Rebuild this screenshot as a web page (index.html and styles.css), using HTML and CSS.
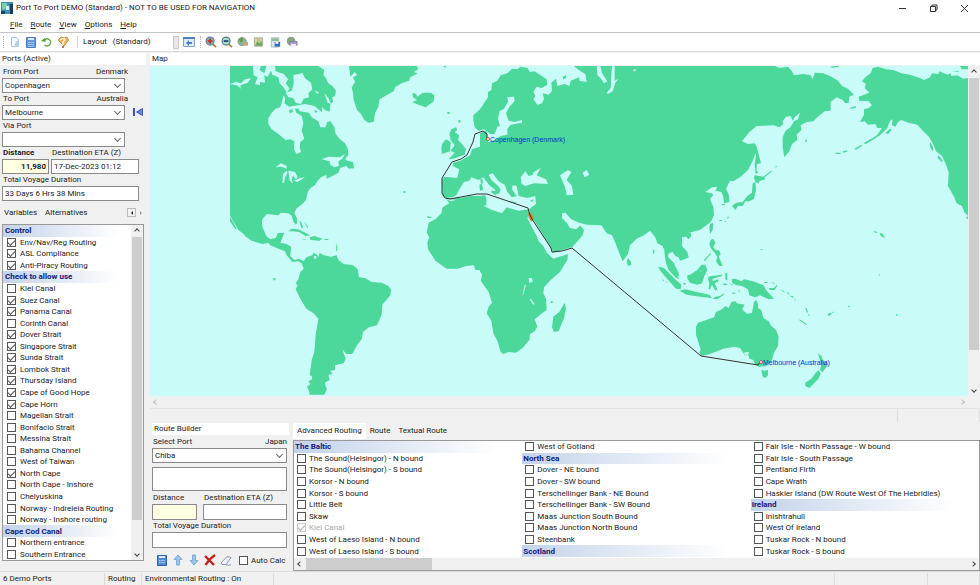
FILE: index.html
```html
<!DOCTYPE html>
<html lang="en">
<head>
    <meta charset="UTF-8">
    <meta name="viewport" content="width=device-width, initial-scale=1.0">
    <title>Port To Port DEMO (Standard)</title>
    <link rel="stylesheet" href="styles.css">
</head>
<body>

<!-- Title bar -->
<header class="titlebar">
    <svg class="app-icon" width="12" height="12" viewBox="0 0 12 12"><path fill="#3f8fb0" d="M0 0h12v12H0z"/><path fill="#7fd0a0" d="M1 1h5v4L3 8 1 7z"/><path fill="#d8eef4" d="M5 4h3v4H5z"/><path fill="#17405e" d="M9 2h3v10H9zM0 9h4v3H0z"/></svg>
    <h1>Port To Port DEMO (Standard) - NOT TO BE USED FOR NAVIGATION</h1>
    <div class="window-buttons">
        <button aria-label="Minimize"><svg width="9" height="9" viewBox="0 0 9 9"><path d="M1 4.500h7"/></svg></button>
        <button aria-label="Restore"><svg width="9" height="9" viewBox="0 0 9 9"><path d="M1.500 2.500h5v5h-5zM3 2.500v-1.500h5v5H6.500"/></svg></button>
        <button aria-label="Close"><svg width="9" height="9" viewBox="0 0 9 9"><path d="M1 1l7 7M8 1L1 8"/></svg></button>
    </div>
</header>

<nav class="menu">
    <a href="#"><u>F</u>ile</a>
    <a href="#"><u>R</u>oute</a>
    <a href="#"><u>V</u>iew</a>
    <a href="#"><u>O</u>ptions</a>
    <a href="#"><u>H</u>elp</a>
</nav>

<div class="toolbar">
    <span class="grip"></span>
    <button aria-label="New"><svg width="12" height="12" viewBox="0 0 12 12"><path fill="#f4f9ff" stroke="#a9bfdd" d="M2.500 1.500h5l2 2v7h-7z"/><path fill="#b7cdea" d="M7 5h3v6H5z"/></svg></button>
    <button aria-label="Calculate"><svg width="12" height="12" viewBox="0 0 12 12"><path fill="#5f97d8" stroke="#4a7cbc" d="M1.500 1.500h9v10h-9z"/><path fill="#d9ecff" d="M3 2h6v2H3z"/><path stroke="#b9d6f5" d="M3 6.500h6M3 8.500h6M3 10.500h6" stroke-dasharray="1.500 .7"/></svg></button>
    <button aria-label="Refresh"><svg width="12" height="12" viewBox="0 0 12 12"><path fill="none" stroke="#6aae52" stroke-width="1.500" d="M3 4.500A3.600 3.600 0 1 1 3.500 9"/><path fill="#4da02f" d="M0 5l4.500 1L4 1.800z"/></svg></button>
    <button aria-label="Help"><svg width="12" height="12" viewBox="0 0 12 12"><path fill="#e9b45b" stroke="#cf924a" d="M1 4l3-3 3 1 3-1 1.500 3L7 10 5 8z"/><path fill="none" stroke="#fff" stroke-width="1.300" d="M4 4c0-2 4-2 4 0L6 6v3"/><circle cx="6" cy="11" r="1" fill="#8d4c38"/></svg></button>
    <span class="split"></span>
    <span class="layout-name">Layout&nbsp;&nbsp; (Standard)</span>
    <button class="layout-drop" aria-label="Choose layout"></button>
    <button aria-label="Save layout"><svg width="12" height="12" viewBox="0 0 12 12"><path fill="#dcecfb" stroke="#7fa4d0" d="M.5 1.500h11v9H.5z"/><path fill="#4c80c0" d="M0 1h12v2H0zM3 7l3-3v2h3v2H6v2z"/></svg></button>
    <span class="grip grip-map"></span>
    <button aria-label="Zoom in"><svg width="12" height="12" viewBox="0 0 13 12"><path stroke="#b8862f" stroke-width="2" d="M8 8l4 3.500"/><circle cx="5.500" cy="5" r="4.300" fill="#7fb0a8" stroke="#6a7e96" stroke-width="1.300"/><path stroke="#d02b2b" stroke-width="2" d="M3 5h5M5.500 2.500v5"/></svg></button>
    <button aria-label="Zoom out"><svg width="12" height="12" viewBox="0 0 13 12"><path stroke="#b8862f" stroke-width="2" d="M8 8l4 3.500"/><circle cx="5.500" cy="5" r="4.300" fill="#a9dcc8" stroke="#5a7a90" stroke-width="1.300"/><path stroke="#284a78" stroke-width="2" d="M3 5h5"/></svg></button>
    <button aria-label="Pan map"><svg width="12" height="12" viewBox="0 0 13 12"><circle cx="5.500" cy="5.500" r="4.500" fill="#86b9a0" stroke="#7c9f88"/><path fill="#6c9a3e" d="M2 3l4-2 1 3-3 3z"/><path fill="#b8a88a" d="M6 6h6v4H6z"/></svg></button>
    <button aria-label="Map picture"><svg width="12" height="12" viewBox="0 0 13 12"><path fill="#c6d3b4" stroke="#a4ae98" d="M1.500 1.500h9v9h-9z"/><path fill="#6fa45c" d="M2 10l3-5 2 3 2-4 1 6z"/><circle cx="6" cy="4" r="1.500" fill="#d8b25c"/></svg></button>
    <button class="spaced" aria-label="Save map"><svg width="12" height="12" viewBox="0 0 13 12"><path fill="#dde8f2" stroke="#a4b6c8" d="M1.500 1.500h8v10h-8z"/><path fill="#8fbb98" d="M2 2h7v3H2z"/><path fill="#2f6cc0" d="M5 6h6v5H5z"/><path fill="#fff" d="M6 6h3v2H6z"/></svg></button>
    <button aria-label="Print map"><svg width="12" height="12" viewBox="0 0 13 12"><circle cx="5.500" cy="5" r="4.200" fill="#84a878" stroke="#869a88"/><path fill="#a494c4" stroke="#8a7cae" d="M4 5.500h8v4H4z"/><path fill="#ece8f6" d="M5 8h6v3H5z"/></svg></button>
</div>

<div class="workspace">

    <!-- Ports panel -->
    <aside class="sidebar">
        <h2 class="pane-title">Ports (Active)</h2>
        <div class="ports">
            <div class="field narrow">
                <div class="caption"><label for="fromPort">From Port</label><span>Denmark</span></div>
                <span class="drop"><select id="fromPort"><option>Copenhagen</option></select></span>
            </div>
            <div class="with-button">
                <div class="field narrow">
                    <div class="caption"><label for="toPort">To Port</label><span>Australia</span></div>
                    <span class="drop"><select id="toPort"><option>Melbourne</option></select></span>
                </div>
                <button class="swap" aria-label="First port"><svg width="11" height="10" viewBox="0 0 11 10"><path fill="#3c55b8" d="M0 1h2v8H0z"/><path fill="#6f86d6" stroke="#3c55b8" d="M9.500 1.500v7L3.500 5z"/></svg></button>
            </div>
            <div class="field narrow">
                <div class="caption"><label for="viaPort">Via Port</label></div>
                <span class="drop"><select id="viaPort"><option></option></select></span>
            </div>
            <div class="pair">
                <div class="field distance">
                    <div class="caption strong"><label for="distance">Distance</label></div>
                    <input type="text" id="distance" class="number" value="11,980">
                </div>
                <div class="field">
                    <div class="caption"><label for="eta">Destination ETA (Z)</label></div>
                    <input type="text" id="eta" value="17-Dec-2023 01:12">
                </div>
            </div>
            <div class="field">
                <div class="caption"><label for="duration">Total Voyage Duration</label></div>
                <input type="text" id="duration" value="33 Days 6 Hrs 38 Mins">
            </div>
        </div>
        <div class="side-tabs">
            <button>Variables</button>
            <button>Alternatives</button>
            <button class="tab-prev" aria-label="Previous tab"></button>
            <button class="tab-next" aria-label="Next tab"></button>
        </div>
        <div class="listbox">
            <div class="checks" id="variables"></div>
            <div class="vscroll"><i class="up"></i><div class="thumb"></div><i class="down"></i></div>
        </div>
    </aside>

    <main class="content">
        <h2 class="pane-title">Map</h2>
        <div class="map-row">
            <svg class="map" viewBox="150 66 818 330" preserveAspectRatio="xMidYMid slice" role="img" aria-label="World map with route">
                <rect x="0" y="0" width="1400" height="700" fill="#c9fbf9"/>
                <!-- North America, Greenland, Iceland -->
                <g transform="translate(225 60) scale(.33333)">
                    <path class="land" d="M15 18H280L298 30 295 45 303 55 310 70 322 78 333 92 330 108 322 112 324 125 316 132 314 155 300 150 290 140 292 160 310 172 320 190 328 200 332 222 345 238 360 250 368 265 370 284 360 298 368 302 384 306 387 325 372 326 364 318 345 324 340 338 322 348 305 356 304 345 290 350 278 362 270 375 256 385 248 396 243 420 232 432 215 445 208 458 217 478 215 492 207 488 200 468 190 460 168 458 160 466 125 462 112 478 108 500 110 525H60L40 510 22 480 15 465z"/>
                    <path class="water" d="M130 175L140 158 152 146 166 142 176 106 181 115 178 130 192 140 218 136 240 132 268 138 290 155 316 166 316 184 306 186 302 202 286 202 280 184 260 172 252 158 226 154 214 158 230 168 235 190 230 212 238 236 226 246 224 262 228 276 214 282 207 268 208 244 196 238 182 240 160 222 140 208 130 192zM205 45L222 42 232 38 240 55 258 68 262 88 250 100 252 112 236 116 228 132 212 128 205 114 190 112 182 98 200 92 206 72zM84 18H108L104 30 118 40 124 18H150L152 34 176 42 190 58 182 70 194 86 186 98 174 80 164 70 160 52 142 44 138 32 128 50 118 46 120 68 106 66 104 76 90 72 98 52 86 46zM15 72L32 66 48 70 60 58 78 55 68 68 46 76 48 86 36 76zM268 92l14 4-4 6zM298 100l12 14 8 18-10-4zM290 298l20-8 34 2 16-10-8 14-12 8 2 14-14 4-12-8-2-10zM152 322l16-12 18 8-2 8-14-6zM172 368l2-26 10-10 4 6-8 14-2 16zM190 332l20 4 8 16-6 6-8-12-4 14 4 10-10-8zM206 362l12 4 22-14-14 2z"/>
                    <path class="land" d="M210 145l12 2 2 10-10 2zM192 150l10-2 2 8-10 4zM268 150l10 4-6 6z"/>
                    <path class="land" d="M372 18H575L580 28 566 36 578 40 556 52 552 62 530 70 510 82 506 94 484 106 464 118 460 140 450 160 446 186 430 188 418 180 408 162 396 150 386 120 384 98 380 82 390 66 384 52 396 46 390 36 376 50zM562 98L574 102 576 110 594 98 618 98 628 106 626 124 602 142 574 132 562 126 576 120 564 112zM655 18h8l-2 5zM668 156h6v5h-6zM534 394h8v4h-8zM606 468l12 4-6 3z"/>
                    <path class="land" d="M15 470l20 36-4 2-16-26zM222 482l6 4 6 14-5 2zM236 482l14 20-3 2z"/>
                </g>
                <!-- South America -->
                <g transform="translate(225 220) scale(.33333)">
                    <path class="land" d="M35-10H110L112 20 124 48 136 58 152 54 158 40 178 38 166 68 184 72 198 80 196 108 208 120 222 116 236 124 244 112 262 106 266 98 276 104 280 112 284 98 296 106 318 110 335 106 340 120 356 132 384 136 398 148 402 172 420 174 440 186 470 188 490 198 498 208 496 226 484 240 472 254 470 284 456 316 432 322 414 336 410 358 396 376 382 402 364 402 352 388 362 416 356 430 330 436 330 450 316 452 322 462 310 464 314 480 300 488 302 500 306 506 298 524H254L252 512 246 500 256 492 250 484 262 478 260 468 254 466 260 420 268 396 272 344 280 296 266 280 244 266 226 236 212 208 218 196 212 190 220 178 226 156 236 146 230 130 218 124 202 126 184 104 180 94 160 86 136 76 130 68 112 72 80 62 60 48 58 30z"/>
                    <path class="land" d="M190 34l10-8 20 2 36 18-14 2-20-12-18-2zM254 52l14-4 24 8-8 6-28-2zM230 58h12v3zM298 57h12v3h-12zM332 66l5 14-1 14-3-2 1-14zM206-2l10 12-4 4zM228 10l5 14-3 2zM145 174h6v7h-6zM15-2l20 28-5-2-15-20z"/>
                    <path class="water" d="M266 108h8v8h-6z"/>
                </g>
                <!-- Europe and Asia -->
                <g transform="translate(420 60) scale(.33333)">
                    <path class="land" d="M160 180L160 166 180 148 204 112 204 96 214 90 216 70 232 62 242 46 262 40 276 26 292 28 302 20 322 24 330 36 344 34 380 58 382 74 366 84 350 80 340 96 346 108 340 118 352 134 366 130 372 116 368 100 386 104 396 92 394 68 408 56 412 78 434 72 448 78 452 62 478 52 478 62 500 66 496 42 476 30 462 18H1065L1078 24 1104 20 1116 34 1122 46 1150 42 1172 46 1178 58 1184 38 1210 40 1234 50 1254 62 1266 78 1284 86 1302 104 1288 110 1286 128 1276 130 1268 120 1250 112 1232 126 1232 152 1214 154 1196 168 1180 184 1160 186 1142 196 1144 210 1130 224 1132 240 1116 252 1108 274 1093 292 1088 262 1088 232 1096 214 1112 200 1122 184 1134 178 1140 158 1124 172 1118 182 1112 168 1098 170 1088 184 1090 192 1078 202 1062 196 1010 198 988 216 966 244 984 252 1004 250 1006 282 998 302 984 330 962 350 940 364 930 362 918 386 926 402 928 426 912 430 910 410 904 396 886 392 892 380 876 382 856 396 874 400 880 404 870 418 880 440 882 466 872 486 840 510 806 518 812 526 792 532 786 530 786 558 802 576 806 592 794 598 780 602 776 592 766 588 758 576 746 580 742 596 752 614 768 638 778 658 766 652 746 630 738 610 734 582 728 558 712 550 706 532 690 512 674 524 650 536 630 556 624 582 608 604 598 580 586 548 576 526 560 520 544 496 500 494 470 486 456 496 436 500 440 482 456 486 466 480 480 496 492 510 488 526 458 560 396 580 388 556 356 506 334 470 328 450 300 430 220 440 110 420 85 416 68 408 66 360 72 350 112 354 118 328 98 318 100 308 122 302 150 286 156 268 180 260 180 220 198 212 192 208 176 212 164 202z"/>
                    <path class="water" d="M262 112L282 110 284 124 268 140 258 160 266 182 284 186 306 180 306 188 272 194 262 206 262 224 242 228 224 240 204 246 200 212 210 222 224 222 232 200 240 198 234 176 238 154 252 146 264 126z"/>
                    <path class="water" d="M305 372L302 352 316 334 326 348 340 344 338 338 362 324 350 346 378 358 384 372 342 370 316 378zM420 346L444 330 454 336 440 360 456 378 460 404 440 406 434 378zM488 338L500 330 508 344 494 352zM78 414L98 412 110 404 118 388 132 366 148 362 154 352 176 360 190 352 208 376 224 388 232 402 238 400 242 388 232 376 214 360 206 344 218 340 236 364 254 374 262 396 276 412 290 408 276 388 278 376 290 378 296 408 322 414 346 408 348 432 328 447 300 448 266 440 250 440 246 456 220 448 200 436 188 408 150 408 120 414zM541 18L546 40 562 64 552 70 546 60 532 44 530 18zM576 18h8l0 44 12-6-10 12-8 26-14 8-4-4 12-14 2-38zM426 460l10-2 18 20 22 10 6 8-14 12-18-4-10-16-14-14zM328 458l60 98 14 22-10-2-24-46z"/>
                    <path class="land" d="M181 358l6-2 2 14-6 2zM178 374l8-2 3 18-9 2zM214 392l20 2-6 12-14-8zM270 424l18 2v3l-18-2zM330 422l12-4-6 8zM94 208L108 202 112 210 104 216 118 226 114 240 128 254 138 268 134 284 100 296 86 298 104 278 92 272 104 256 92 240 88 222zM66 252L78 238 92 246 90 274 66 282 64 266zM82 157h6v4h-6zM115 180h6v8h-5zM186 240l12-4 4 8-12 4zM70 18h8l-2 5zM428 50l10-4 0 8-8 4z"/>
                    <!-- Sakhalin, Kurils, Japan -->
                    <path class="land" d="M1004 250l6 10 10 38 3 12-12 2-2 18 6 8-8 4-3-30 4-26-8-20zM1004 346l12 2 16 2 4 8-16 4-4 8-10-4-4-12zM998 370l8-4 2 24-6 26-14 8-12 0-8 14-14 0-8 12-10-12 12-10 20-2 14-18 14-10zM1030 350l24-18 3 1-22 18zM1062 322l8-4 1 3zM906 432h8v4h-8zM922 470l6 1-6 6zM914 484l5-1-3 4zM1155 240l4-2 2 8-4 1zM1288 144l20-6-2 6-12 2zM1230 20l26-4 1 4-20 3zM868 498l10-6 0 18-8 12z"/>
                    <path class="water" d="M638 30l10-3-3 8zM728 566l4-1 2 12-4 1z"/>
                </g>
                <!-- Alaska and the west coast -->
                <g transform="translate(600 60) scale(.33333)">
                    <path class="land" d="M1105 54L1090 56 1072 46 1054 48 1052 40 1042 44 1018 34 1014 42 996 40 990 52 972 60 960 54 930 44 904 40 880 30 858 28 834 20 818 24 812 40 796 52 786 64 798 72 794 84 808 98 776 110 778 122 806 124 816 136 806 144 792 148 792 164 780 186 794 184 804 194 826 192 832 204 846 204 832 224 818 234 790 250 798 252 840 226 862 204 870 182 878 178 876 196 886 200 894 186 904 180 926 188 952 194 972 216 988 232 1002 258 1008 274 1026 288 1040 318 1046 338 1044 378 1062 410 1070 430 1086 438 1094 458 1105 468zM1080 18h25v10h-20zM1056 34h20v3zM856 220l14-14 5 2-10 14zM990 246l8 12 2 16-7-6-4-14zM1016 286l12 16-4 4-12-14zM764 266l20-12 2 3-18 12zM706 278l16 0 0 4-14 0zM728 274l14-3 0 4-14 3zM1098 472l7-4v12zM822 514l10 2-1 2-10-1zM838 518l8 2 8 12-8-4z"/>
                </g>
                <!-- Africa -->
                <g transform="translate(410 190) scale(.33333)">
                    <path class="land" d="M108 26L122 34 146 28 190 20 226 16 230 34 222 48 246 60 276 70 290 52 326 62 356 58 358 74 352 84 362 104 380 138 386 154 400 168 410 188 430 206 474 192 472 210 462 226 450 246 420 272 402 292 400 310 408 326 410 360 396 370 374 388 382 410 374 424 360 432 358 450 338 474 318 488 296 486 280 492 272 486 262 452 250 430 244 392 230 370 236 350 246 338 236 306 212 272 216 254 208 240 196 240 192 226 168 228 144 236 110 236 76 212 66 196 54 178 52 156 58 142 50 128 56 98 78 86 94 70 98 52 118 40zM464 338L468 356 462 384 446 424 432 426 426 412 430 380 448 366zM52 80h12v4H52zM422 334h6v5h-6z"/>
                    <path class="water" d="M356 264l10 0 2 12-10 2zM358 326l4 0 12 16-4 2zM344 286l4-2-8 30-3 2z"/>
                    <path class="sand" d="M354 66l10 4 9 17-9 8-8-11z"/>
                </g>
                <!-- South-east Asia, Australia and the Pacific -->
                <g transform="translate(620 220) scale(.33333)">
                    <path class="land" d="M24 114l8 10 2 10-10 4-4-12zM114 140L132 144 150 162 168 180 184 194 182 208 168 206 150 186 134 168 122 154zM178 212L196 208 230 216 268 224 276 234 240 230 200 224zM136 108l8 2 18 20 14 30 2 10-14-8-16-20zM202 166L210 164 232 150 244 134 256 134 262 150 254 166 246 190 232 194 210 188 202 176zM266 170l10-2 30-4 0 4-28 8 0 8 16-6 2 6-12 6 8 18-6 4-10-18-6 14-4 0 2-20-4-8zM316 158l6 2 0 22-6-4zM272 60l8-4 6 12-6 14 8 12-4 4-12-14-4-12zM282 88l16 4 4 12-6 4 8 20 4 10-10 0-10-14 4-12-8-14zM252 120l20-22 2 2-20 24zM334 178L346 176 364 184 372 178 400 184 430 196 440 212 462 236 446 238 420 226 406 232 388 226 384 208 366 198 350 196 338 190zM446 204l16 0 8-8-2-6 4 8-8 12-14 0zM432 186l10 0 0 3-10 0zM450 186l14 4-1 3zM480 208l14 6-2 3zM498 216l10 4-2 4zM508 226l14 4-4 4zM522 234l6 8-4-1zM286 230l14-2 12-8 0 4-20 14-14-2zM310 190l12 2-2 4-10-2zM326 190l12 3-1 3zM336 218h10v3h-10zM354 206l6 8-3 2zM98 92l5-4 0 12-4 2zM270 12l8-4 2 6-6 20-4-8zM198 38l14 0 2 10-8 10-8-8zM298 0h8v3h-8zM556 264l4 1 4 12-3 1zM564 282l5 4-3 2zM538 298l22 14-2 3-20-14zM622 282l10-4 4 4-10 6zM636 278l5-4-1 5zM684 257l8 4-8 0zM776 162l5 3-3 2zM828 282h4v5h-4zM422 87h5v3h-5zM762 33l10 3-2 2zM780 40l14 10 0 4-12-6zM126 178l6 2-2 4zM138 184l4 4-2 2zM188 188l10 2-4 6z"/>
                    <path class="land" d="M228 320L234 308 252 302 282 292 288 276 306 268 316 258 326 264 334 246 348 244 350 250 374 254 366 268 382 282 396 278 402 246 408 240 414 252 414 264 424 270 430 294 446 304 452 316 468 330 476 350 474 378 462 398 456 420 440 438 416 440 404 432 400 420 388 416 384 402 376 408 360 384 344 380 310 386 286 396 262 404 244 408 238 398 242 388 228 344zM424 450L434 452 444 450 444 466 436 474 428 470zM594 400L604 408 610 424 620 428 622 438 608 456 600 450 604 434zM596 450L602 462 594 478 580 492 568 504 556 498 556 488 574 476 586 460z"/>
                    <path class="water" d="M370 398l16-2 0 6-10 4zM240 152l3 0-2 4z"/>
                </g>
                <path class="route" d="M487 138L487 134 483 131 475 134 473 142 467 155 461 159 452 162 442 178 442 193 445 198 450 199 477 194 487 194 528 208 530 215 532 219 551 248 552 252 562 251 572 248 701 356 758 365 760 362"/>
                <circle class="pin" cx="488" cy="139" r="1.500"/>
                <circle class="pin" cx="761" cy="362" r="1.500"/>
                <text class="port-name" x="490" y="142">Copenhagen (Denmark)</text>
                <text class="port-name" x="763" y="365">Melbourne (Australia)</text>
            </svg>
            <div class="vscroll"><i class="up"></i><div class="thumb"></div><i class="down"></i></div>
        </div>
        <div class="hscroll disabled"><i class="left"></i><div class="track"></div><i class="right"></i></div>
        <div class="map-status"><span></span><span></span></div>

        <div class="bottom">
            <!-- Route builder -->
            <section class="builder">
                <h2 class="pane-title">Route Builder</h2>
                <div class="field">
                    <div class="caption"><label for="selectPort">Select Port</label><span>Japan</span></div>
                    <span class="drop"><select id="selectPort"><option>Chiba</option></select></span>
                </div>
                <textarea aria-label="Route ports"></textarea>
                <div class="pair">
                    <div class="field distance">
                        <div class="caption"><label for="legDistance">Distance</label></div>
                        <input type="text" id="legDistance" class="number">
                    </div>
                    <div class="field">
                        <div class="caption"><label for="legEta">Destination ETA (Z)</label></div>
                        <input type="text" id="legEta">
                    </div>
                </div>
                <div class="field">
                    <div class="caption"><label for="legDuration">Total Voyage Duration</label></div>
                    <input type="text" id="legDuration">
                </div>
                <div class="builder-tools">
                    <button aria-label="Calculate route"><svg width="12" height="12" viewBox="0 0 12 12"><path fill="#4f8bd0" stroke="#2f62a8" d="M1.500 1.500h9v10h-9z"/><path fill="#d9ecff" d="M3 2h6v2H3z"/><path stroke="#b9d6f5" d="M3 6.500h6M3 8.500h6" stroke-dasharray="1.500 .7"/></svg></button>
                    <button aria-label="Move up"><svg width="12" height="12" viewBox="0 0 12 12"><path fill="#9cc3ee" stroke="#7fabdc" d="M6 1l4 4.500H7.500V11h-3V5.500H2z"/></svg></button>
                    <button aria-label="Move down"><svg width="12" height="12" viewBox="0 0 12 12"><path fill="#9cc3ee" stroke="#7fabdc" d="M6 11l4-4.500H7.500V1h-3v5.500H2z"/></svg></button>
                    <button aria-label="Delete"><svg width="12" height="12" viewBox="0 0 12 12"><path stroke="#c42218" stroke-width="2.400" d="M1 2l9 9M11 1Q5 5 1.500 11" fill="none"/></svg></button>
                    <button aria-label="Clear"><svg width="12" height="12" viewBox="0 0 12 12"><path fill="#eef0fa" stroke="#8f97bd" d="M1 9l6-6.500 4 1L6 10.500H2z"/><path stroke="#8f97bd" d="M6 11h5"/></svg></button>
                    <label class="check"><input type="checkbox">Auto Calc</label>
                </div>
            </section>

            <!-- Advanced routing -->
            <section class="routing">
                <div class="tabs">
                    <button class="active">Advanced Routing</button>
                    <button>Route</button>
                    <button>Textual Route</button>
                </div>
                <div class="routing-box">
                    <div class="routing-grid" id="routing"></div>
                    <div class="hscroll"><i class="left"></i><div class="track"><div class="thumb"></div></div><i class="right"></i></div>
                </div>
            </section>
        </div>
    </main>
</div>

<footer class="statusbar">
    <span class="ports-count">6 Demo Ports</span>
    <span class="mode">Routing</span>
    <span class="env">Environmental Routing : On</span>
    <span class="rest"></span>
    <span class="cell"></span>
    <span class="cell-last"></span>
</footer>

<script>
    // "#" starts a group heading, "+" is checked, "x" is disabled
    const variables = [
        '#Control', '+Env/Nav/Reg Routing', '+ASL Compliance', '+Anti-Piracy Routing',
        '#Check to allow use', '-Kiel Canal', '+Suez Canal', '+Panama Canal', '-Corinth Canal',
        '+Dover Strait', '+Singapore Strait', '+Sunda Strait', '+Lombok Strait', '+Thursday Island',
        '+Cape of Good Hope', '+Cape Horn', '-Magellan Strait', '-Bonifacio Strait', '-Messina Strait',
        '-Bahama Channel', '-West of Taiwan', '+North Cape', '-North Cape - Inshore', '-Chelyuskina',
        '-Norway - Indreleia Routing', '-Norway - Inshore routing',
        '#Cape Cod Canal', '-Northern entrance', '-Southern Entrance'
    ];

    const routing = [
        '#The Baltic', '-The Sound(Helsingor) - N bound', '-The Sound(Helsingor) - S bound',
        '-Korsor - N bound', '-Korsor - S bound', '-Little Belt', '-Skaw', 'xKiel Canal',
        '-West of Laeso Island - N bound', '-West of Laeso Island - S bound',
        '-West of Gotland', '#North Sea', '-Dover - NE bound', '-Dover - SW bound',
        '-Terschellinger Bank - NE Bound', '-Terschellinger Bank - SW Bound',
        '-Maas Junction South Bound', '-Maas Junction North Bound', '-Steenbank', '#Scotland',
        '-Fair Isle - North Passage - W bound', '-Fair Isle - South Passage', '-Pentland Firth',
        '-Cape Wrath', '-Haskier Island (DW Route West Of The Hebridies)', '#Ireland',
        '-Inishtrahull', '-West Of Ireland', '-Tuskar Rock - N bound', '-Tuskar Rock - S bound'
    ];

    // Fill a list with headings and tick boxes
    function fillList(id, items) {
        document.getElementById(id).innerHTML = items.map(item => {
            const mark = item[0];
            const name = item.slice(1);
            if (mark === '#') return `<h3>${name}</h3>`;
            const state = mark === '+' ? 'checked' : mark === 'x' ? 'checked disabled' : '';
            return `<label class="check"><input type="checkbox" ${state}>${name}</label>`;
        }).join('');
    }

    fillList('variables', variables);
    fillList('routing', routing);
</script>

</body>
</html>
```
FILE: styles.css
```css
* {
    box-sizing: border-box;
}

body {
    margin: 0;
    height: 100vh;
    display: flex;
    flex-direction: column;
    overflow: hidden;
    background: #f0f0f0;
    color: #222;
    font: 8px/12px Roboto, "Open Sans", sans-serif;
}

button, input, select, textarea {
    margin: 0;
    padding: 0;
    border: 0;
    background: none;
    color: inherit;
    font: inherit;
}

button {
    display: inline-flex;
    align-items: center;
    justify-content: center;
}

h1, h2, h3 {
    margin: 0;
    font-size: inherit;
    font-weight: normal;
}

/* Title, menu and toolbar */
.titlebar {
    display: flex;
    align-items: center;
    height: 16px;
    padding-left: 1px;
    gap: 3px;
    background: #fff;
}

.window-buttons {
    display: flex;
    margin-left: auto;
}

.window-buttons button {
    width: 31px;
}

.window-buttons path {
    fill: none;
    stroke: #333;
}

.menu {
    display: flex;
    align-items: center;
    gap: 8px;
    height: 17px;
    padding: 1px 0 0 10px;
    background: #fff;
    border-bottom: 1px solid #c4c4c4;
}

.menu a {
    color: inherit;
    text-decoration: none;
}

.toolbar {
    display: flex;
    align-items: center;
    height: 19px;
    padding-left: 3px;
    gap: 4px;
    background: #fff;
    border-bottom: 1px solid #dcdcdc;
}

.grip {
    height: 12px;
    margin-right: 1px;
    border-left: 1px dotted #b8b8b8;
}

.grip-map {
    margin: 0 0 0 1px;
}

.split {
    height: 12px;
    margin: 0 1px 0 4px;
    border-left: 1px solid #d4d4d4;
}

.layout-name {
    width: 86px;
}

.layout-drop {
    width: 6px;
    height: 13px;
    background: #e8e8e8;
    border: 1px solid #c8c8c8;
}

.toolbar .spaced {
    margin-left: 1px;
}

/* Panes */
.workspace {
    display: flex;
    flex: 1;
    min-height: 0;
    gap: 4px;
}

.sidebar {
    display: flex;
    flex-direction: column;
    width: 146px;
    padding-bottom: 10px;
}

.content {
    display: flex;
    flex-direction: column;
    flex: 1;
    min-width: 0;
}

.pane-title {
    height: 12px;
    margin: 1px 0;
    padding-left: 2px;
    background: #fff;
}

.ports {
    padding: 0 7px 0 2px;
}

.field {
    flex: 1;
}

.narrow {
    flex: none;
    width: 123px;
}

.caption {
    display: flex;
    justify-content: space-between;
    height: 12px;
    margin-right: -3px;
    padding-left: 1px;
    white-space: nowrap;
}

.strong {
    font-weight: bold;
}

.field input, .field select, textarea {
    display: block;
    width: 100%;
    height: 15px;
    padding: 0 2px;
    background: #fff;
    border: 1px solid #8a8a8a;
}

.field select {
    appearance: none;
}

.field .number {
    background: #ffffe1;
    font-weight: bold;
    text-align: right;
}

.drop {
    display: block;
    position: relative;
}

.drop::after {
    content: "";
    position: absolute;
    right: 5px;
    top: 4px;
    width: 4px;
    height: 4px;
    border: solid #666;
    border-width: 0 1px 1px 0;
    transform: rotate(45deg);
}

.with-button {
    display: flex;
    align-items: flex-end;
    gap: 8px;
}

.swap {
    height: 17px;
}

.pair {
    display: flex;
    gap: 2px;
}

.distance {
    flex: 0 0 47px;
}

.side-tabs {
    display: flex;
    align-items: center;
    gap: 8px;
    height: 23px;
    padding: 0 1px 0 4px;
}

.tab-prev, .tab-next {
    width: 9px;
    height: 9px;
}

.tab-prev {
    margin-left: auto;
    border: 1px solid #bbb;
}

.tab-next {
    margin-left: -8px;
}

.tab-prev::before, .tab-next::before {
    content: "";
    border: 2px solid transparent;
    border-right-color: #222;
    border-left-width: 0;
}

.tab-next::before {
    border-right-width: 0;
    border-left: 2px solid #999;
}

/* Check lists */
.listbox {
    display: flex;
    flex: 1;
    min-height: 0;
    margin: 0 2px;
    background: #fff;
    border: 1px solid #999;
}

.checks {
    display: grid;
    grid-auto-rows: 1fr;
    flex: 1;
    min-width: 0;
}

.checks h3, .routing-grid h3 {
    display: flex;
    align-items: center;
    min-height: 0;
    padding-left: 2px;
    background: linear-gradient(to right, #c3d3ea, #fff 90%);
    color: #101880;
    font-weight: bold;
    line-height: 11px;
}

.check {
    display: flex;
    align-items: center;
    gap: 4px;
    min-height: 0;
    padding-left: 4px;
    line-height: 11px;
    white-space: nowrap;
}

.check input {
    appearance: none;
    display: flex;
    justify-content: center;
    width: 9px;
    height: 9px;
    background: #fff;
    border: 1px solid #555;
}

.check input:checked::before {
    content: "";
    width: 6px;
    height: 3px;
    margin-top: 1px;
    border: solid #555;
    border-width: 0 0 1px 1px;
    transform: rotate(-45deg);
}

.check input:disabled {
    border-color: #ccc;
}

.check input:disabled::before {
    border-color: #aaa;
}

.check:has(input:disabled) {
    color: #aaa;
}

/* Scroll bars */
.vscroll {
    display: flex;
    flex-direction: column;
    align-items: center;
    width: 12px;
    background: #f0f0f0;
}

.vscroll .thumb {
    flex: 1;
    width: 10px;
    background: #cdcdcd;
}

.hscroll {
    display: flex;
    align-items: center;
    height: 12px;
    background: #f0f0f0;
}

.track {
    flex: 1;
    align-self: stretch;
}

.track .thumb {
    width: 19%;
    height: 100%;
    background: #cdcdcd;
}

.up, .down, .left, .right {
    flex: none;
    width: 4px;
    height: 4px;
    margin: 4px;
    border: solid #444;
    border-width: 1px 0 0 1px;
    transform: rotate(45deg);
}

.down {
    transform: rotate(225deg);
}

.left {
    transform: rotate(-45deg);
}

.right {
    transform: rotate(135deg);
}

.disabled {
    padding-right: 12px;
}

.disabled i {
    border-color: #bbb;
}

.listbox .down {
    margin-top: 32px;
}

.map-row .down {
    margin-top: 38px;
}

/* Map */
.map-row {
    display: flex;
    flex: 1;
    min-height: 0;
}

.map {
    flex: 1;
    min-width: 0;
    height: 100%;
}

.land {
    fill: #4bd89a;
}

.water {
    fill: #c9fbf9;
}

.sand {
    fill: #c98a34;
}

.route {
    fill: none;
    stroke: #333;
}

.pin {
    fill: #fff;
    stroke: #c0504d;
}

.port-name {
    fill: #0a30d0;
    font: 7px "Liberation Sans", sans-serif;
}

.map-status {
    display: flex;
    justify-content: flex-end;
    height: 14px;
    border-top: 1px solid #e2e2e2;
}

.map-status span {
    width: 82px;
    border-left: 1px solid #dcdcdc;
}

.map-status span:last-child {
    width: 1px;
}

/* Bottom panels */
.bottom {
    display: flex;
    gap: 4px;
    height: 149px;
    padding-left: 2px;
}

.builder {
    width: 137px;
}

.builder .caption {
    margin-right: 2px;
}

.builder .field input, .builder .drop {
    width: calc(100% - 2px);
}

.builder .drop {
    margin-bottom: 4px;
}

.builder textarea {
    width: 135px;
    height: 24px;
    margin-bottom: 1px;
    resize: none;
}

.builder .pair {
    gap: 4px;
}

.builder .field input {
    height: 16px;
}

.builder-tools {
    display: flex;
    align-items: center;
    gap: 4px;
    height: 24px;
    padding-left: 4px;
}

.builder-tools .check {
    gap: 3px;
    padding-left: 3px;
}

.routing {
    display: flex;
    flex-direction: column;
    flex: 1;
    min-width: 0;
}

.tabs {
    display: flex;
    height: 18px;
    padding: 1px 0;
}

.tabs button {
    padding: 0 4px;
}

.tabs .active {
    background: #fff;
}

.routing-box {
    display: flex;
    flex-direction: column;
    flex: 1;
    min-height: 0;
    background: #fff;
    border: 1px solid #999;
}

.routing-grid {
    display: grid;
    grid-auto-flow: column;
    grid-template-rows: repeat(10, 1fr);
    grid-template-columns: repeat(3, 1fr);
    flex: 1;
    min-height: 0;
    padding-bottom: 1px;
}

.routing-grid h3 {
    padding-left: 1px;
}

.routing-grid .check {
    gap: 3px;
    padding-left: 3px;
}

/* Status bar */
.statusbar {
    display: flex;
    align-items: center;
    height: 14px;
    border-top: 1px solid #dcdcdc;
}

.statusbar span {
    height: 12px;
    padding-left: 3px;
    border-right: 1px solid #dcdcdc;
}

.ports-count {
    width: 105px;
}

.mode {
    width: 37px;
}

.env {
    width: 132px;
}

.rest {
    flex: 1;
}

.cell {
    width: 93px;
}

.cell-last {
    width: 52px;
}
```
